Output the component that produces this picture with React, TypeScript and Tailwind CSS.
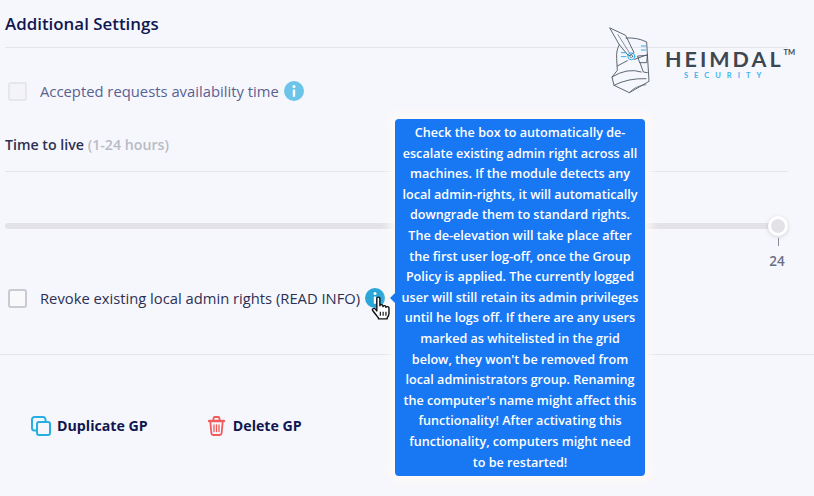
import React from "react"

const tooltipLines = [
  "Check the box to automatically de-",
  "escalate existing admin right across all",
  "machines. If the module detects any",
  "local admin-rights, it will automatically",
  "downgrade them to standard rights.",
  "The de-elevation will take place after",
  "the first user log-off, once the Group",
  "Policy is applied. The currently logged",
  "user will still retain its admin privileges",
  "until he logs off. If there are any users",
  "marked as whitelisted in the grid",
  "below, they won't be removed from",
  "local administrators group. Renaming",
  "the computer's name might affect this",
  "functionality! After activating this",
  "functionality, computers might need",
  "to be restarted!",
]

const InfoDot = ({ color }: { color: string }) => (
  <svg width="20" height="20" viewBox="0 0 20 20" className="shrink-0">
    <circle cx="10" cy="10" r="10" fill={color} />
    <circle cx="10" cy="5.6" r="1.5" fill="#fff" />
    <rect x="8.8" y="8.4" width="2.4" height="7.4" rx="0.6" fill="#fff" />
  </svg>
)

const DuplicateIcon = () => (
  <svg width="20" height="20" viewBox="0 0 20 20" fill="none" stroke="#27aee3" strokeWidth="2" className="shrink-0">
    <rect x="6" y="6" width="13" height="13" rx="2" />
    <path d="M6 14.5H3.5A2.5 2.5 0 0 1 1 12V3.5A2.5 2.5 0 0 1 3.5 1H12a2.5 2.5 0 0 1 2.5 2.5V6" />
  </svg>
)

const TrashIcon = () => (
  <svg width="17" height="20" viewBox="0 0 17 20" fill="none" stroke="#f25b5b" strokeWidth="1.8" strokeLinecap="round" strokeLinejoin="round" className="shrink-0">
    <path d="M1 5H16" strokeWidth="2.4" />
    <path d="M5.5 4V2.4A1.4 1.4 0 0 1 6.9 1H10.1A1.4 1.4 0 0 1 11.5 2.4V4" />
    <path d="M2.4 6.5L3.4 17.4A1.8 1.8 0 0 0 5.2 19H11.8A1.8 1.8 0 0 0 13.6 17.4L14.6 6.5" />
    <path d="M6 9V15.5M8.5 9V15.5M11 9V15.5" strokeWidth="1.3" />
  </svg>
)

const Logo = () => (
  <div className="absolute left-[604px] top-[22px] flex items-start">
    <svg width="60" height="75" viewBox="0 0 180 225" fill="none" stroke="#525c67" strokeWidth="2.8" strokeLinejoin="round" strokeLinecap="round">
      <path d="M18 18L65 40L90 92L74 102L46 68Z" />
      <path d="M42 38L76 92" strokeWidth="2" />
      <path d="M66 48Q100 46 128 60L135 178L76 212L30 190L24 165L40 145L38 110Q36 85 46 68" />
      <path d="M92 112L130 98M70 116L40 132" />
      <path d="M102 102L130 100L128 122L108 122Z" />
      <path d="M108 122L118 150L130 152" />
      <path d="M24 165Q70 136 112 150M30 190Q72 168 126 170" />
      <path d="M76 212Q92 192 126 188" strokeWidth="2.2" />
      <circle cx="82" cy="103" r="10.5" stroke="#1fa8ee" />
      <circle cx="82" cy="103" r="4" strokeWidth="2.2" />
      <path d="M52 92H66M52 104H66M112 72H125M112 84H125" stroke="#1fa8ee" />
    </svg>
    <div className="ml-[1px] mt-[24px] flex flex-col items-start font-['Lato',sans-serif]">
      <div className="flex items-start text-[#3d4751]">
        <span className="text-[21.5px] font-bold leading-[26px] tracking-[3px]">HEIMDAL</span>
        <span className="mt-[2px] text-[7.5px] font-bold leading-[9px]">TM</span>
      </div>
      <span className="ml-[19px] mt-[-1px] text-[7.5px] font-bold leading-[9px] tracking-[6px] text-[#3cb4ee]">SECURITY</span>
    </div>
  </div>
)

const Tooltip = () => (
  <div className="absolute left-[395px] top-[119px] w-[250px] rounded-[4px] bg-[#1877f2] pb-[3px] pt-[4px] text-center text-[12.6px] font-semibold leading-[20.6px] text-white shadow-[0_0_8px_6px_rgba(255,250,246,0.9)]">
    {tooltipLines.map((line) => (
      <div key={line} className="whitespace-nowrap">
        {line}
      </div>
    ))}
    <div className="absolute left-[-5px] top-[174px] h-0 w-0 border-y-[5px] border-r-[5px] border-y-transparent border-r-[#1877f2]" />
  </div>
)

const Hand = () => (
  <svg width="21" height="25" viewBox="0 0 18 24" preserveAspectRatio="none" className="absolute left-[371px] top-[296px]">
    <path
      d="M5 2.2c0-1.5 2.6-1.5 2.6 0v7.2c0-1.4 2.6-1.4 2.6 0v.8c0-1.4 2.6-1.4 2.6 0v.8c0-1.3 2.6-1.2 2.6.2v5.6c0 2-1 3.2-1.6 4.2v1H6.4v-1c-1-1.4-4.6-6.4-5-7.2-.8-1.3 1-2.6 2.2-1.4L5 14.4Z"
      fill="#fff"
      stroke="#111"
      strokeWidth="1.2"
      strokeLinejoin="round"
    />
    <path d="M8 15v4M10.4 15v4M12.8 15v4" stroke="#111" strokeWidth="1" />
  </svg>
)

export default function App() {
  return (
    <div className="relative h-[496px] w-[814px] overflow-hidden bg-[#f6f7fd] font-['Open_Sans',sans-serif]">
      <div className="px-[5px] pt-[13px]">
        <div className="mr-[21px] h-[35px] border-b border-[#e4e5ea]">
          <h2 className="text-[16.9px] font-semibold leading-[22px] text-[#10164f]">Additional Settings</h2>
        </div>
        <div className="mt-[32px] flex h-[22px] items-center pl-[3px]">
          <span className="h-[19px] w-[19px] rounded-[3px] border-2 border-[#e6e6ec] bg-[#f4f4f8]" />
          <span className="ml-[13px] text-[14.8px] text-[#5b6191]">Accepted requests availability time</span>
          <span className="ml-[5px]">
            <InfoDot color="#6cc5e8" />
          </span>
        </div>
        <div className="mr-[21px] mt-[33px] h-[37px] border-b border-[#e4e5ea] text-[14.2px] font-semibold leading-[20px]">
          <span className="text-[#2c3153]">Time to live</span> <span className="text-[#b9bbc4]">(1-24 hours)</span>
        </div>
        <div className="relative mr-[31px] mt-[51px] h-[6px] rounded-full bg-[#e3e3e7]">
          <span className="absolute right-[-10px] top-[-7px] h-[20px] w-[20px] rounded-full border-[3px] border-white bg-[#e3e3e7] shadow-[0_1px_4px_rgba(0,0,0,0.15)]" />
        </div>
        <div className="ml-auto mr-[21px] flex w-[20px] flex-col items-center">
          <span className="mt-[9px] h-[8px] w-px bg-[#8a8d99]" />
          <span className="mr-[2px] mt-[6px] text-[13.5px] font-semibold leading-[18px] text-[#6b6f85]">24</span>
        </div>
        <div className="mt-[17px] flex h-[22px] items-center pl-[3px]">
          <span className="h-[19px] w-[19px] rounded-[3px] border-2 border-[#c9cad2] bg-[#f9f9fc]" />
          <span className="ml-[13px] text-[14.75px] text-[#2c3153]">Revoke existing local admin rights (READ INFO)</span>
          <span className="ml-[5px]">
            <InfoDot color="#2ba6d9" />
          </span>
        </div>
      </div>
      <div className="mt-[45px] border-t border-[#e4e5ea]" />
      <div className="flex items-center pl-[31px] pt-[60px] text-[14.2px] font-bold text-[#10164f]">
        <DuplicateIcon />
        <span className="ml-[6px]">Duplicate GP</span>
        <span className="ml-[60px]">
          <TrashIcon />
        </span>
        <span className="ml-[8px]">Delete GP</span>
      </div>
      <Logo />
      <Tooltip />
      <Hand />
    </div>
  )
}
